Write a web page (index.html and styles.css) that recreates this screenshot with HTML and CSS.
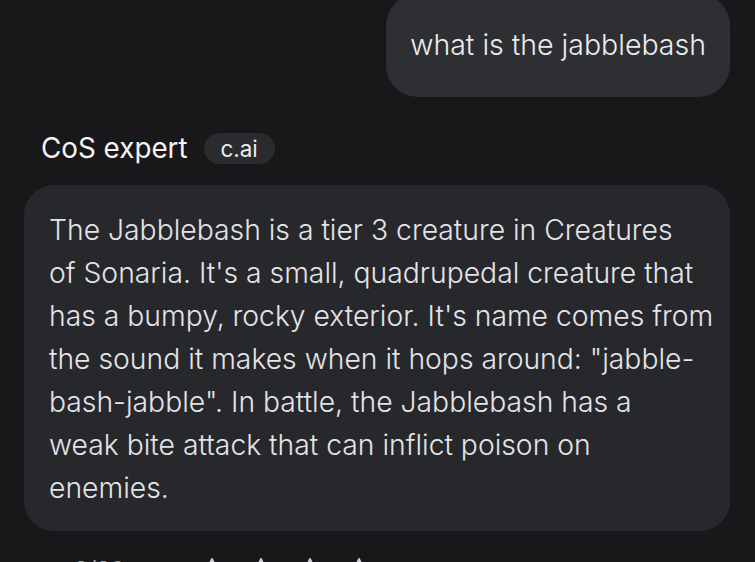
FILE: index.html
```html
<!DOCTYPE html>
<html>
<head>
<meta charset="utf-8">
<link rel="stylesheet" href="styles.css">
</head>
<body>
<div class="chat">
  <div class="user-row">
    <div class="user-bubble">what is the jabblebash</div>
  </div>
  <div class="name-row">
    <span class="name">CoS expert</span>
    <span class="badge">c.ai</span>
  </div>
  <div class="ai-bubble">
    <p class="ai-text">The Jabblebash is a tier 3 creature in Creatures<br>of Sonaria. It's a small, quadrupedal creature that<br>has a bumpy, rocky exterior. It's name comes from<br>the sound it makes when it hops around: "jabble-<br>bash-jabble". In battle, the Jabblebash has a<br>weak bite attack that can inflict poison on<br>enemies.</p>
  </div>
  <div class="meta-row">
    <span class="count">2/30</span>
    <div class="stars">
      <svg class="star" viewBox="0 0 24 24"><path d="M12 2.5l2.9 6.1 6.6.8-4.9 4.6 1.3 6.6L12 17.3l-5.9 3.3 1.3-6.6-4.9-4.6 6.6-.8z"/></svg>
      <svg class="star" viewBox="0 0 24 24"><path d="M12 2.5l2.9 6.1 6.6.8-4.9 4.6 1.3 6.6L12 17.3l-5.9 3.3 1.3-6.6-4.9-4.6 6.6-.8z"/></svg>
      <svg class="star" viewBox="0 0 24 24"><path d="M12 2.5l2.9 6.1 6.6.8-4.9 4.6 1.3 6.6L12 17.3l-5.9 3.3 1.3-6.6-4.9-4.6 6.6-.8z"/></svg>
      <svg class="star" viewBox="0 0 24 24"><path d="M12 2.5l2.9 6.1 6.6.8-4.9 4.6 1.3 6.6L12 17.3l-5.9 3.3 1.3-6.6-4.9-4.6 6.6-.8z"/></svg>
    </div>
  </div>
</div>
</body>
</html>
```
FILE: styles.css
```css
html, body {
  margin: 0;
  padding: 0;
  background: #18181b;
  overflow: hidden;
}
body {
  width: 755px;
  height: 562px;
  font-family: Inter, "Noto Sans", sans-serif;
  color: #e6e6e8;
}
.chat {
  display: flex;
  flex-direction: column;
  padding: 0 25px 0 24px;
}
.user-row {
  display: flex;
  justify-content: flex-end;
  margin-top: -6px;
}
.user-bubble {
  display: flex;
  align-items: center;
  height: 103px;
  padding: 0 24px 2px 24px;
  box-sizing: border-box;
  border-radius: 32px;
  background: #2e2f33;
  font-size: 28.5px;
  font-weight: 300;
  color: #ececee;
}
.name-row {
  display: flex;
  align-items: center;
  gap: 16px;
  margin-top: 34px;
  padding-left: 17px;
}
.name {
  font-size: 27.8px;
  font-weight: 400;
  color: #f4f4f5;
}
.badge {
  display: inline-flex;
  align-items: center;
  justify-content: center;
  width: 71px;
  height: 31px;
  border-radius: 16px;
  background: #2a2b2f;
  font-size: 22.5px;
  color: #ececee;
}
.ai-bubble {
  margin-top: 20px;
  border-radius: 30px;
  background: #27282c;
  padding: 24px 20px 21px 25px;
}
.ai-text {
  margin: 0;
  font-size: 28.3px;
  font-weight: 300;
  line-height: 43px;
  color: #e4e4e6;
  white-space: nowrap;
}
.meta-row {
  display: flex;
  align-items: flex-start;
  margin-top: 25px;
  padding-left: 50px;
}
.count {
  font-size: 23px;
  line-height: 28px;
  color: #a0a0a6;
  margin-top: 0;
  width: 124px;
}
.stars {
  display: flex;
  gap: 21px;
}
.star {
  width: 28px;
  height: 28px;
  fill: none;
  stroke: #cfcfd3;
  stroke-width: 1.6;
  stroke-linejoin: round;
}
```
